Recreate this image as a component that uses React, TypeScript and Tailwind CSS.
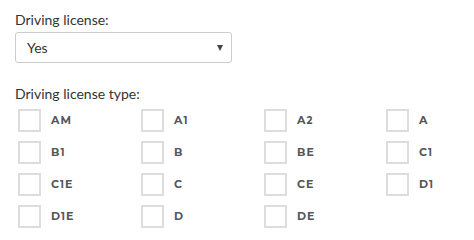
import { useState } from "react";

const TYPES = ["AM", "A1", "A2", "A", "B1", "B", "BE", "C1", "C1E", "C", "CE", "D1", "D1E", "D", "DE"];

function Code({ text }: { text: string }) {
  // digits render small, like old-style figures in the reference
  return (
    <>
      {text.split("").map((ch, i) =>
        /\d/.test(ch) ? (
          <span key={i} className="text-[10px]">
            {ch}
          </span>
        ) : (
          <span key={i}>{ch}</span>
        )
      )}
    </>
  );
}

export default function App() {
  const [license, setLicense] = useState("Yes");
  const [checked, setChecked] = useState<Record<string, boolean>>({});

  return (
    <div className="w-[474px] h-[240px] bg-white pl-[15px] pt-[10px] font-['Lato',sans-serif] text-[#333]">
      <label className="block text-[14px] leading-[20px]">Driving license:</label>
      <div className="relative mt-[2px] w-[217px]">
        <select
          value={license}
          onChange={(e) => setLicense(e.target.value)}
          className="w-full h-[31px] appearance-none rounded-[3px] border border-[#ccc] bg-white pl-[11px] text-[14px] text-[#333] outline-none"
        >
          <option>Yes</option>
          <option>No</option>
        </select>
        <span className="pointer-events-none absolute right-[9px] top-[13px] h-0 w-0 border-l-[3.5px] border-r-[3.5px] border-t-[6px] border-l-transparent border-r-transparent border-t-[#444]" />
      </div>

      <label className="mt-[21px] block text-[14px] leading-[20px]">Driving license type:</label>
      <div className="mt-[5px] grid grid-cols-[123px_123px_122px_100px] gap-y-[9px] pl-[3px]">
        {TYPES.map((t) => (
          <label key={t} className="flex items-center gap-[10px] cursor-pointer">
            <input
              type="checkbox"
              checked={!!checked[t]}
              onChange={() => setChecked((c) => ({ ...c, [t]: !c[t] }))}
              className="peer sr-only"
            />
            <span className="h-[23px] w-[23px] shrink-0 border-2 border-[#ddd] bg-white" />
            <span className="text-[11px] font-bold tracking-[1px] text-[#555] font-['Montserrat','Lato',sans-serif]">
              <Code text={t} />
            </span>
          </label>
        ))}
      </div>
    </div>
  );
}
